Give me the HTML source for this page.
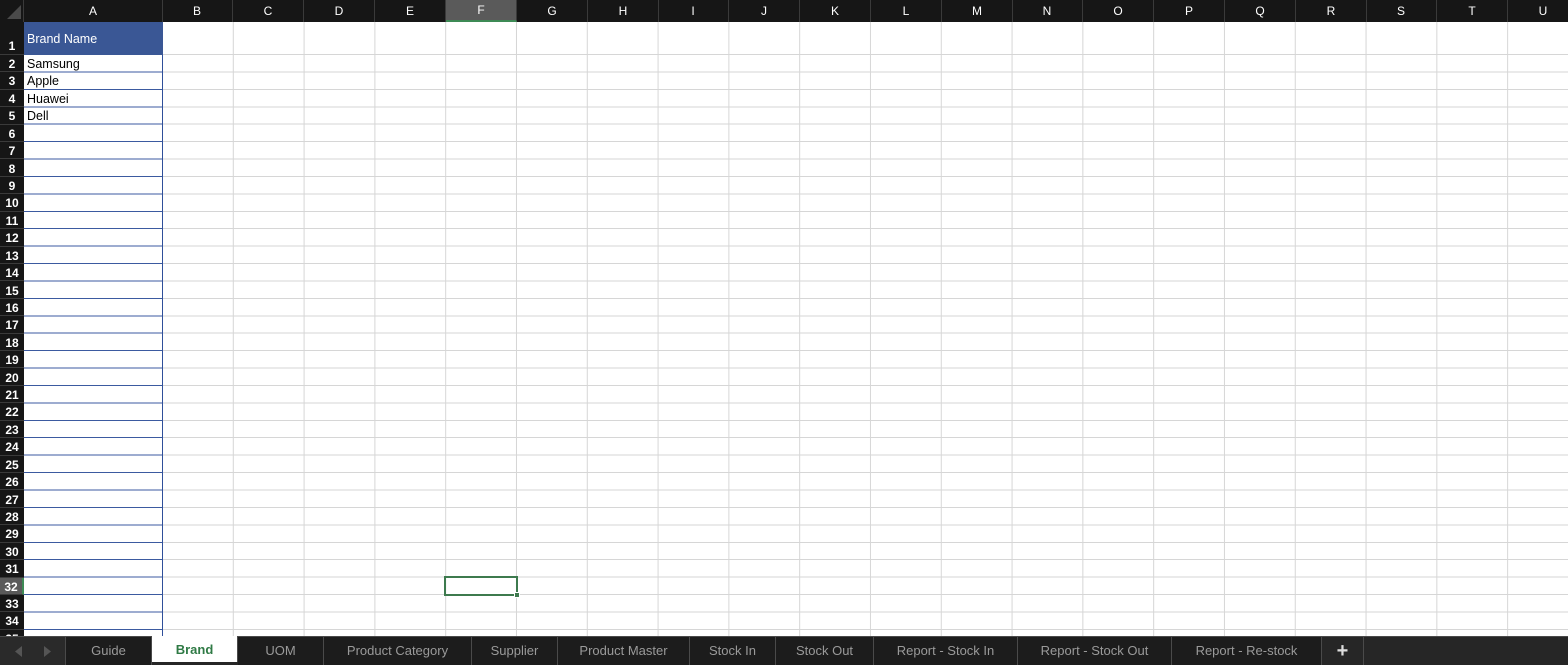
<!DOCTYPE html>
<html><head><meta charset="utf-8"><style>
*{margin:0;padding:0;box-sizing:border-box}
body{width:1568px;height:665px;overflow:hidden;background:#fff;position:relative;font-family:"Liberation Sans",sans-serif}
.abs{position:absolute}
#colhdr{left:0;top:0;width:1568px;height:22px;background:#161616}
.ch{position:absolute;top:0;height:22px;line-height:22px;text-align:center;color:#fff;font-size:12px;border-right:1px solid #3a3a3a}
#rowhdr{left:0;top:22px;width:24px;height:614px;background:#161616;overflow:hidden}
.rh{position:absolute;left:0;width:24px;color:#fff;font-size:12px;font-weight:bold;text-align:center;border-bottom:1px solid #3a3a3a}
#grid{left:162px;top:22px;width:1406px;height:614px;
background-image:linear-gradient(to right,#d6d6d6 1px,transparent 1px),linear-gradient(to bottom,transparent 32px,#d6d6d6 32px,#d6d6d6 33px,transparent 33px);
background-size:70.8px 100%,100% 100%;background-position:70.8px 0,0 0;}
#grid2{left:162px;top:55px;width:1406px;height:581px;
background-image:repeating-linear-gradient(to bottom,transparent 0,transparent 16.42px,#d6d6d6 16.42px,#d6d6d6 17.42px)}
#colA{left:24px;top:55px;width:139px;height:581px;border-right:1px solid #2f4f9a;
background-image:repeating-linear-gradient(to bottom,transparent 0,transparent 16.42px,#3b5aa0 16.42px,#3b5aa0 17.42px)}
#a1{left:24px;top:22px;width:139px;height:33px;background:#3a5795;color:#fff;font-size:12.5px;padding:10px 0 0 3px}
.cell{position:absolute;left:27px;font-size:12.5px;color:#000;height:17px;line-height:19px}
#tabs{left:0;top:636px;width:1568px;height:29px;background:#262626;border-top:1px solid #4a4a4a}
.tab{position:absolute;top:0;height:28px;line-height:28px;text-align:center;color:#9a9a9a;font-size:13px;border-right:1px solid #4a4a4a;background:#1c1c1c}
</style></head><body>
<div id="grid" class="abs"></div>
<div id="grid2" class="abs"></div>
<div id="colA" class="abs"></div>
<div id="a1" class="abs">Brand Name</div>
<div class="cell" style="top:55px">Samsung</div>
<div class="cell" style="top:72.4px">Apple</div>
<div class="cell" style="top:89.8px">Huawei</div>
<div class="cell" style="top:107.3px">Dell</div>
<div class="abs" style="left:444px;top:576px;width:74px;height:20px;border:2px solid #3d7a4e"></div>
<div class="abs" style="left:514px;top:592px;width:6px;height:6px;background:#3d7a4e;border:1px solid #fff"></div>

<div id="colhdr" class="abs">
<div class="abs" style="left:0;top:0;width:24px;height:22px;border-right:1px solid #3a3a3a"></div>
<svg class="abs" style="left:6px;top:5px" width="16" height="15"><polygon points="15,0 15,14 1,14" fill="#4a4a4a"/></svg>
<div class="ch" style="left:24px;width:139px">A</div>
<div class="ch" style="left:162px;width:71px">B</div>
<div class="ch" style="left:233px;width:71px">C</div>
<div class="ch" style="left:304px;width:71px">D</div>
<div class="ch" style="left:375px;width:71px">E</div>
<div class="ch" style="left:446px;width:71px;background:#5a5a5a;border-bottom:2px solid #3d8a55;line-height:21px">F</div>
<div class="ch" style="left:517px;width:71px">G</div>
<div class="ch" style="left:588px;width:71px">H</div>
<div class="ch" style="left:658px;width:71px">I</div>
<div class="ch" style="left:729px;width:71px">J</div>
<div class="ch" style="left:800px;width:71px">K</div>
<div class="ch" style="left:871px;width:71px">L</div>
<div class="ch" style="left:942px;width:71px">M</div>
<div class="ch" style="left:1012px;width:71px">N</div>
<div class="ch" style="left:1083px;width:71px">O</div>
<div class="ch" style="left:1154px;width:71px">P</div>
<div class="ch" style="left:1225px;width:71px">Q</div>
<div class="ch" style="left:1296px;width:71px">R</div>
<div class="ch" style="left:1366px;width:71px">S</div>
<div class="ch" style="left:1437px;width:71px">T</div>
<div class="ch" style="left:1508px;width:71px">U</div>
</div>

<div id="rowhdr" class="abs">
<div class="rh" style="top:0;height:33px;line-height:48px">1</div>
<div class="rh" style="top:33px;height:17.4px;line-height:19px">2</div>
<div class="rh" style="top:50.4px;height:17.4px;line-height:19px">3</div>
<div class="rh" style="top:67.8px;height:17.4px;line-height:19px">4</div>
<div class="rh" style="top:85.3px;height:17.4px;line-height:19px">5</div>
<div class="rh" style="top:102.7px;height:17.4px;line-height:19px">6</div>
<div class="rh" style="top:120.1px;height:17.4px;line-height:19px">7</div>
<div class="rh" style="top:137.5px;height:17.4px;line-height:19px">8</div>
<div class="rh" style="top:154.9px;height:17.4px;line-height:19px">9</div>
<div class="rh" style="top:172.4px;height:17.4px;line-height:19px">10</div>
<div class="rh" style="top:189.8px;height:17.4px;line-height:19px">11</div>
<div class="rh" style="top:207.2px;height:17.4px;line-height:19px">12</div>
<div class="rh" style="top:224.6px;height:17.4px;line-height:19px">13</div>
<div class="rh" style="top:242px;height:17.4px;line-height:19px">14</div>
<div class="rh" style="top:259.5px;height:17.4px;line-height:19px">15</div>
<div class="rh" style="top:276.9px;height:17.4px;line-height:19px">16</div>
<div class="rh" style="top:294.3px;height:17.4px;line-height:19px">17</div>
<div class="rh" style="top:311.7px;height:17.4px;line-height:19px">18</div>
<div class="rh" style="top:329.1px;height:17.4px;line-height:19px">19</div>
<div class="rh" style="top:346.6px;height:17.4px;line-height:19px">20</div>
<div class="rh" style="top:364px;height:17.4px;line-height:19px">21</div>
<div class="rh" style="top:381.4px;height:17.4px;line-height:19px">22</div>
<div class="rh" style="top:398.8px;height:17.4px;line-height:19px">23</div>
<div class="rh" style="top:416.2px;height:17.4px;line-height:19px">24</div>
<div class="rh" style="top:433.7px;height:17.4px;line-height:19px">25</div>
<div class="rh" style="top:451.1px;height:17.4px;line-height:19px">26</div>
<div class="rh" style="top:468.5px;height:17.4px;line-height:19px">27</div>
<div class="rh" style="top:485.9px;height:17.4px;line-height:19px">28</div>
<div class="rh" style="top:503.3px;height:17.4px;line-height:19px">29</div>
<div class="rh" style="top:520.8px;height:17.4px;line-height:19px">30</div>
<div class="rh" style="top:538.2px;height:17.4px;line-height:19px">31</div>
<div class="rh" style="top:555.6px;height:17.4px;line-height:19px;background:#5a5a5a;border-right:2px solid #3d8a55">32</div>
<div class="rh" style="top:573px;height:17.4px;line-height:19px">33</div>
<div class="rh" style="top:590.4px;height:17.4px;line-height:19px">34</div>
<div class="rh" style="top:607.9px;height:17.4px;line-height:19px">35</div>
</div>

<div id="tabs" class="abs">
<div class="tab" style="left:0;width:66px;background:#2a2a2a"></div>
<svg class="abs" style="left:14px;top:8px" width="40" height="13"><polygon points="8,1 8,12 1,6.5" fill="#555"/><polygon points="30,1 30,12 37,6.5" fill="#555"/></svg>
<div class="tab" style="left:66px;width:86px">Guide</div>
<div class="tab" style="left:152px;top:-1px;height:26px;width:86px;background:#fff;color:#2f7a45;font-weight:bold;line-height:28px">Brand</div>
<div class="tab" style="left:238px;width:86px">UOM</div>
<div class="tab" style="left:324px;width:148px">Product Category</div>
<div class="tab" style="left:472px;width:86px">Supplier</div>
<div class="tab" style="left:558px;width:132px">Product Master</div>
<div class="tab" style="left:690px;width:86px">Stock In</div>
<div class="tab" style="left:776px;width:98px">Stock Out</div>
<div class="tab" style="left:874px;width:144px">Report - Stock In</div>
<div class="tab" style="left:1018px;width:154px">Report - Stock Out</div>
<div class="tab" style="left:1172px;width:150px">Report - Re-stock</div>
<div class="tab" style="left:1322px;width:42px;color:#ddd;font-size:20px;font-weight:bold;background:#262626">+</div>
</div>
</body></html>
